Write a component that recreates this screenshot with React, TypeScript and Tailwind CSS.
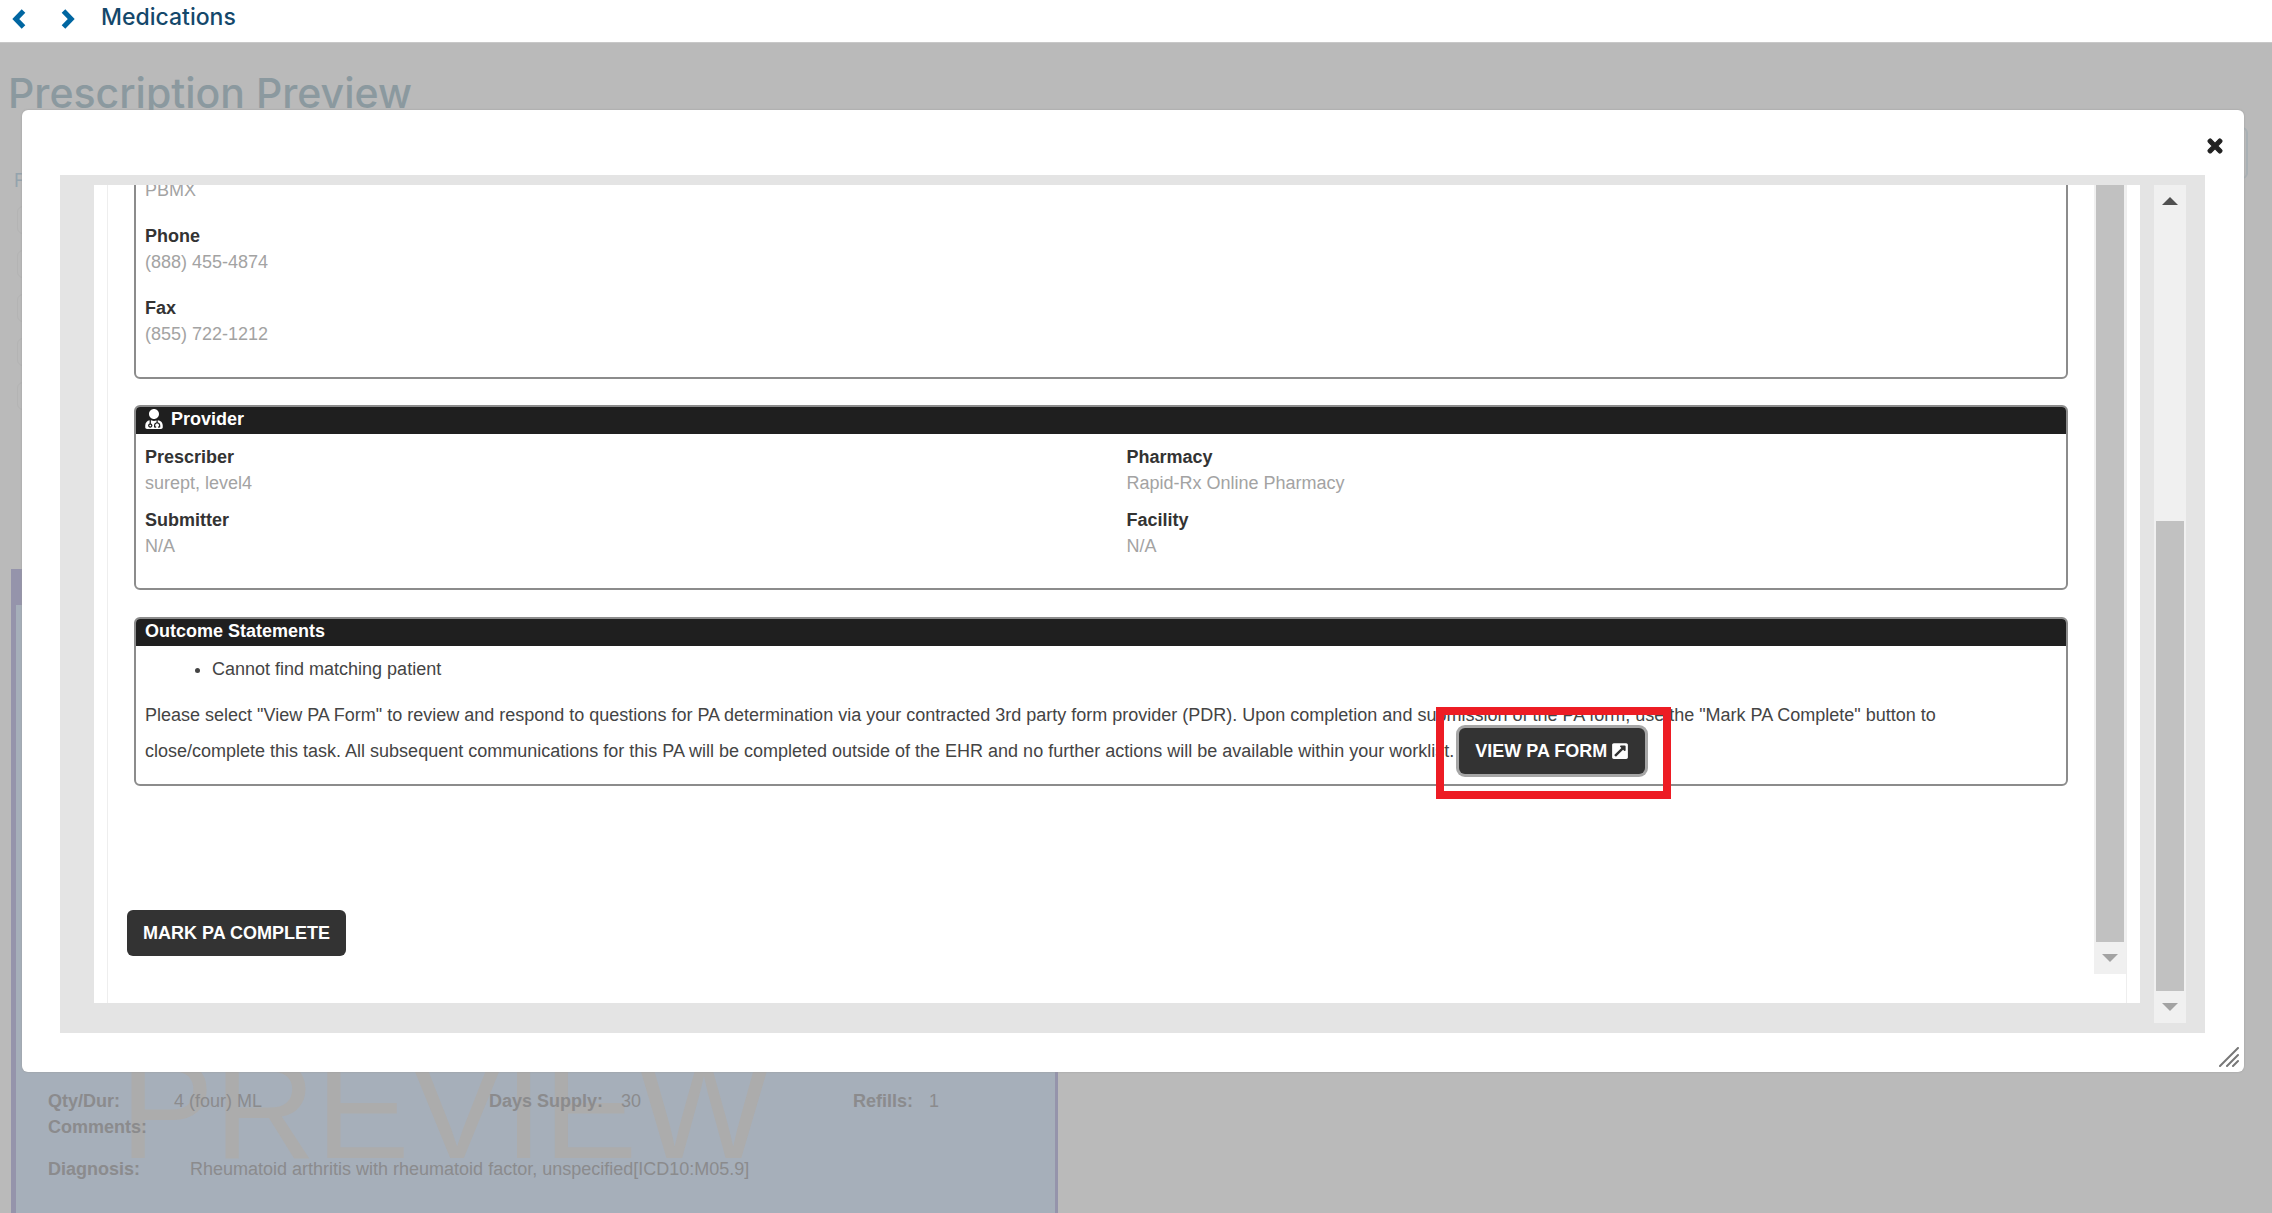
import type React from "react"

import clsx from "clsx"
import { FaExternalLinkSquareAlt, FaTimes, FaUserMd } from "react-icons/fa"

interface FieldProps {
  label?: string
  value: string
}

function Field({ label, value }: FieldProps) {
  return (
    <div>
      {label && <dt className="font-bold text-[#333333]">{label}</dt>}
      <dd className="text-[#a3a3a3]">{value}</dd>
    </div>
  )
}

interface CardProps {
  title?: string
  icon?: React.ReactNode
  className?: string
  children: React.ReactNode
}

function Card({ title, icon, className, children }: CardProps) {
  return (
    <section className={clsx("shrink-0 rounded-md border-2 border-[#8c8c8c]", className)}>
      {title && (
        <h2 className="flex h-[27px] items-center gap-2 rounded-t-sm bg-[#1f1f1f] pb-[3px] pl-[9px] font-bold text-white">
          {icon}
          {title}
        </h2>
      )}
      {children}
    </section>
  )
}

function Chevron({ direction }: { direction: "left" | "right" }) {
  return (
    <svg viewBox="0 0 14 20" className="h-5 w-[14px]" fill="none" stroke="#0066a1" strokeWidth="5">
      <path d={direction === "left" ? "M11.5 2 3.8 10l7.7 8" : "M2.5 2l7.7 8-7.7 8"} />
    </svg>
  )
}

function Arrow({ up, className }: { up?: boolean; className?: string }) {
  return (
    <svg viewBox="0 0 16 8" className={clsx("h-2 w-4", className)} fill="currentColor">
      <path d={up ? "M0 8 8 0l8 8z" : "M0 0h16L8 8z"} />
    </svg>
  )
}

function PreviewPanel() {
  return (
    <div className="absolute top-[526px] bottom-0 left-[11px] w-[1047px] overflow-hidden border-t-[36px] border-r-[3px] border-l-[5px] border-[#9594ab] bg-[#a6afba] text-[18px] leading-[26px] text-[#8b8b8d]">
      {/* Watermark */}
      <div className="absolute top-[434px] left-[104px] text-[141px] leading-[140px] text-[#acacac]">PREVIEW</div>
      <dl className="relative flex flex-col pt-[483px] pl-8">
        <div className="grid grid-cols-[441px_364px_auto]">
          <div className="flex">
            <dt className="w-[126px] font-bold">Qty/Dur:</dt>
            <dd>4 (four) ML</dd>
          </div>
          <div className="flex">
            <dt className="w-[132px] font-bold">Days Supply:</dt>
            <dd>30</dd>
          </div>
          <div className="flex">
            <dt className="w-[76px] font-bold">Refills:</dt>
            <dd>1</dd>
          </div>
        </div>
        <dt className="font-bold">Comments:</dt>
        <div className="flex pt-4">
          <dt className="w-[142px] font-bold">Diagnosis:</dt>
          <dd>Rheumatoid arthritis with rheumatoid factor, unspecified[ICD10:M05.9]</dd>
        </div>
      </dl>
    </div>
  )
}

function PriorAuthDialog() {
  return (
    <div
      role="dialog"
      aria-label="Prior authorization"
      className="absolute top-[67px] right-7 bottom-[141px] left-[22px] flex flex-col rounded-md bg-white pr-[39px] pb-[39px] pl-[38px] shadow-[0_0_2px_#999999]"
    >
      <div className="-mr-5 flex h-[65px] shrink-0 items-start justify-end pt-[26px]">
        <button type="button" aria-label="Close" className="text-[20px] text-[#222222]">
          <FaTimes className="stroke-current stroke-[36]" />
        </button>
      </div>

      <div className="flex min-h-0 flex-1 bg-[#e4e4e4] pt-[10px] pr-[19px] pb-[10px] pl-[34px]">
        <div className="mb-5 flex min-w-0 flex-1 bg-white px-[13px]">
          <div className="flex min-w-0 flex-1 border-x border-[#eeeeee]">
            {/* Scrolled to the end, so the earlier rows run off the top */}
            <div className="flex min-w-0 flex-1 flex-col justify-end overflow-hidden pr-[26px] pb-[47px] pl-[26px]">
              <Card>
                <dl className="flex flex-col gap-5 pb-[30px] pl-[9px]">
                  <Field value="PBMX" />
                  <Field label="Phone" value="(888) 455-4874" />
                  <Field label="Fax" value="(855) 722-1212" />
                </dl>
              </Card>

              <Card title="Provider" icon={<FaUserMd className="h-5 w-[18px]" />} className="mt-[26px]">
                <dl className="grid grid-cols-2 gap-x-[42px] gap-y-[11px] pt-[10px] pb-[29px] pl-[9px]">
                  <Field label="Prescriber" value="surept, level4" />
                  <Field label="Pharmacy" value="Rapid-Rx Online Pharmacy" />
                  <Field label="Submitter" value="N/A" />
                  <Field label="Facility" value="N/A" />
                </dl>
              </Card>

              <Card title="Outcome Statements" className="mt-[27px]">
                <div className="pt-[5px] pb-[15px] pl-[9px] leading-9 text-[#444444]">
                  <ul className="list-disc pb-[10px] pl-[67px]">
                    <li>Cannot find matching patient</li>
                  </ul>
                  <p>
                    Please select "View PA Form" to review and respond to questions for PA determination via your
                    contracted 3rd party form provider (PDR). Upon completion and submission of the PA form, use the
                    "Mark PA Complete" button to
                    <br />
                    close/complete this task. All subsequent communications for this PA will be completed outside of
                    the EHR and no further actions will be available within your worklist.{" "}
                    <span className="relative -my-[5px] inline-block leading-[26px]">
                      <button
                        type="button"
                        className="inline-flex items-center gap-1 rounded-md bg-[#333333] px-4 py-[10px] font-bold text-white ring-3 ring-[#a6a6a6]"
                      >
                        VIEW PA FORM <FaExternalLinkSquareAlt className="size-[18px]" />
                      </button>
                      <span className="pointer-events-none absolute -top-[21px] -right-[26px] -bottom-[25px] -left-[23px] border-8 border-[#ed1c24]" />
                    </span>
                  </p>
                </div>
              </Card>

              <button
                type="button"
                className="mt-[124px] -ml-[7px] shrink-0 self-start rounded-md bg-[#333333] px-4 py-[10px] font-bold text-white"
              >
                MARK PA COMPLETE
              </button>
            </div>

            {/* Inner scrollbar */}
            <div className="mb-[29px] flex w-8 flex-col items-center bg-[#f0f0f0]">
              <div className="w-7 flex-1 bg-[#c1c1c1]" />
              <div className="flex h-8 items-center text-[#a3a3a3]">
                <Arrow />
              </div>
            </div>
          </div>
        </div>

        {/* Outer scrollbar */}
        <div className="ml-[14px] flex w-8 flex-col items-center bg-[#f0f0f0]">
          <div className="flex-5 text-[#505050]">
            <Arrow up className="mt-3" />
          </div>
          <div className="w-7 flex-7 bg-[#c1c1c1]" />
          <div className="flex h-8 items-center text-[#a3a3a3]">
            <Arrow />
          </div>
        </div>
      </div>

      {/* Resize grip */}
      <svg
        viewBox="0 0 20 20"
        className="absolute right-[5px] bottom-[5px] size-5"
        fill="none"
        stroke="#777777"
        strokeWidth="2"
        strokeLinecap="round"
      >
        <path d="M1 19 19 1M8 19 19 8M14 19l5-5" />
      </svg>
    </div>
  )
}

export default function App() {
  return (
    <div className="flex h-screen flex-col font-['Liberation_Sans',Arial,sans-serif] text-[18px] leading-[26px]">
      <header className="flex h-[42px] shrink-0 items-center bg-white pb-1 pl-3">
        <button type="button" aria-label="Back">
          <Chevron direction="left" />
        </button>
        <button type="button" aria-label="Forward" className="ml-[35px]">
          <Chevron direction="right" />
        </button>
        <span className="ml-[26px] pb-1 font-[Inter,sans-serif] text-[23px] leading-7 font-medium text-[#14486b]">
          Medications
        </span>
      </header>

      <main className="relative min-h-0 flex-1 overflow-hidden border-t border-[#c8c8c8] bg-[#bababa]">
        <h1 className="pt-6 pl-2 font-[Inter,sans-serif] text-[41px] leading-[52px] font-medium text-[#8b999f]">
          Prescription Preview
        </h1>
        <p className="pt-[49px] pl-[14px] font-[Inter,sans-serif] text-[#94a3ad]">F</p>
        <div className="flex flex-col gap-4 pt-3 pl-[17px]">
          {[0, 1, 2, 3, 4].map((row) => (
            <div key={row} className="h-7 w-40 rounded-md border border-[#b4b4b4]" />
          ))}
        </div>
        <div className="absolute top-[84px] right-6 h-[52px] w-20 rounded-md border-2 border-[#a9b0b4]" />
        <PreviewPanel />
        <PriorAuthDialog />
      </main>
    </div>
  )
}
